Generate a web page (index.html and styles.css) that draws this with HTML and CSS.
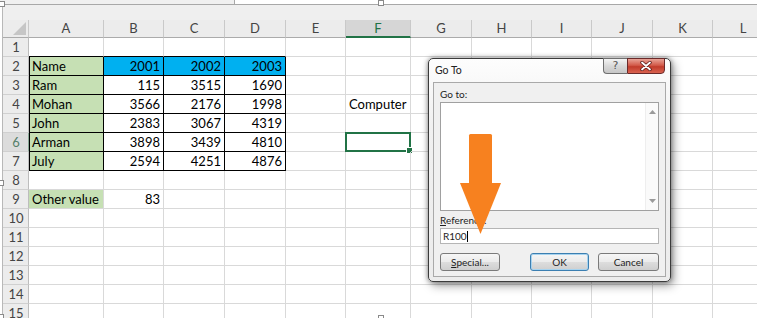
FILE: index.html
```html
<!DOCTYPE html>
<html>
<head>
<meta charset="utf-8">
<link rel="stylesheet" href="styles.css">
</head>
<body>
<div class="app">
  <div class="topbar"><div class="tb-left"></div><div class="tb-box"></div></div>
  <div class="sheet">
    <div class="gutter"></div>
    <div class="grid">
      <div class="strip"></div>
      <div class="row hdr">
        <div class="corner"><span class="tri"></span></div>
        <div>A</div><div>B</div><div>C</div><div>D</div><div>E</div><div class="selcol">F</div><div>G</div><div>H</div><div>I</div><div>J</div><div>K</div><div>L</div>
      </div>
      <div class="row">
        <div class="rh">1</div>
        <div class="bt"></div><div class="bt"></div><div class="bt"></div><div class="bt"></div><div></div><div></div><div></div><div></div><div></div><div></div><div></div><div></div>
      </div>
      <div class="row">
        <div class="rh">2</div>
        <div class="t g bx bxl">Name</div><div class="n bl bx">2001</div><div class="n bl bx">2002</div><div class="n bl bx">2003</div><div></div><div></div><div></div><div></div><div></div><div></div><div></div><div></div>
      </div>
      <div class="row">
        <div class="rh">3</div>
        <div class="t g bx bxl">Ram</div><div class="n bx">115</div><div class="n bx">3515</div><div class="n bx">1690</div><div></div><div></div><div></div><div></div><div></div><div></div><div></div><div></div>
      </div>
      <div class="row">
        <div class="rh">4</div>
        <div class="t g bx bxl">Mohan</div><div class="n bx">3566</div><div class="n bx">2176</div><div class="n bx">1998</div><div></div><div class="t">Computer</div><div></div><div></div><div></div><div></div><div></div><div></div>
      </div>
      <div class="row">
        <div class="rh">5</div>
        <div class="t g bx bxl">John</div><div class="n bx">2383</div><div class="n bx">3067</div><div class="n bx">4319</div><div></div><div></div><div></div><div></div><div></div><div></div><div></div><div></div>
      </div>
      <div class="row">
        <div class="rh selrow">6</div>
        <div class="t g bx bxl">Arman</div><div class="n bx">3898</div><div class="n bx">3439</div><div class="n bx">4810</div><div></div><div class="selcell"></div><div></div><div></div><div></div><div></div><div></div><div></div>
      </div>
      <div class="row">
        <div class="rh">7</div>
        <div class="t g bx bxl">July</div><div class="n bx">2594</div><div class="n bx">4251</div><div class="n bx">4876</div><div></div><div></div><div></div><div></div><div></div><div></div><div></div><div></div>
      </div>
      <div class="row">
        <div class="rh">8</div>
        <div></div><div></div><div></div><div></div><div></div><div></div><div></div><div></div><div></div><div></div><div></div><div></div>
      </div>
      <div class="row">
        <div class="rh">9</div>
        <div class="t g">Other value</div><div class="n">83</div><div></div><div></div><div></div><div></div><div></div><div></div><div></div><div></div><div></div><div></div>
      </div>
      <div class="row">
        <div class="rh">10</div>
        <div></div><div></div><div></div><div></div><div></div><div></div><div></div><div></div><div></div><div></div><div></div><div></div>
      </div>
      <div class="row">
        <div class="rh">11</div>
        <div></div><div></div><div></div><div></div><div></div><div></div><div></div><div></div><div></div><div></div><div></div><div></div>
      </div>
      <div class="row">
        <div class="rh">12</div>
        <div></div><div></div><div></div><div></div><div></div><div></div><div></div><div></div><div></div><div></div><div></div><div></div>
      </div>
      <div class="row">
        <div class="rh">13</div>
        <div></div><div></div><div></div><div></div><div></div><div></div><div></div><div></div><div></div><div></div><div></div><div></div>
      </div>
      <div class="row">
        <div class="rh">14</div>
        <div></div><div></div><div></div><div></div><div></div><div></div><div></div><div></div><div></div><div></div><div></div><div></div>
      </div>
      <div class="row">
        <div class="rh">15</div>
        <div></div><div></div><div></div><div></div><div></div><div></div><div></div><div></div><div></div><div></div><div></div><div></div>
      </div>
    </div>
  </div>

  <span class="handle h-tl"></span>
  <span class="handle h-tm"></span>
  <span class="handle h-ml"></span>
  <span class="handle h-bl"></span>
  <span class="handle h-bm"></span>

  <div class="dlg">
    <div class="dlg-title">Go To</div>
    <div class="dlg-ctrls">
      <div class="btn-help">?</div>
      <div class="btn-close">
        <svg width="14" height="10" viewBox="0 0 14 10"><path d="M3 1.5 L11 8.5 M11 1.5 L3 8.5" stroke="#5a1a1a" stroke-width="3.4" stroke-linecap="round"/><path d="M3 1.5 L11 8.5 M11 1.5 L3 8.5" stroke="#ffffff" stroke-width="1.8" stroke-linecap="round"/></svg>
      </div>
    </div>
    <div class="dlg-body">
      <div class="lbl">Go to:</div>
      <div class="listbox">
        <div class="vscroll">
          <svg class="arr-up" width="7" height="4" viewBox="0 0 7 4"><path d="M0 4 L3.5 0 L7 4 Z" fill="#9a9a9a"/></svg>
          <svg class="arr-dn" width="7" height="4" viewBox="0 0 7 4"><path d="M0 0 L7 0 L3.5 4 Z" fill="#9a9a9a"/></svg>
        </div>
      </div>
      <div class="lbl ref"><u>R</u>eference:</div>
      <div class="input">R100<span class="caret"></span></div>
      <div class="btns">
        <div class="btn"><u>S</u>pecial...</div>
        <div class="btn ok">OK</div>
        <div class="btn">Cancel</div>
      </div>
    </div>
  </div>

  <svg class="arrow" width="44" height="102" viewBox="0 0 44 102">
    <rect x="10" y="0" width="23" height="50" rx="1.5" fill="#f7811f"/>
    <path d="M1 49 L42 49 L21.5 100 Z" fill="#f7811f"/>
  </svg>
</div>
</body>
</html>
```

FILE: styles.css
```css
* { box-sizing: border-box; }
html, body { margin: 0; padding: 0; }
body {
  width: 757px;
  height: 318px;
  overflow: hidden;
  background: #ffffff;
  font-family: Lato, "Liberation Sans", sans-serif;
}
.app {
  position: relative;
  width: 757px;
  height: 318px;
  overflow: hidden;
}
.topbar {
  display: flex;
  height: 5px;
  border-bottom: 1px solid #a8a8a8;
}
.tb-left {
  width: 234px;
  background: #f0f0f0;
}
.tb-box {
  flex: 1;
  background: #ffffff;
  border-left: 1px solid #a8a8a8;
}
.sheet {
  display: flex;
}
.gutter {
  width: 3px;
  flex: none;
  background: #ffffff;
  border-right: 1px solid #b8b8b8;
}
.grid {
  flex: none;
  width: 770px;
}
.strip {
  height: 15px;
  background: #efefef;
}
.row {
  display: grid;
  grid-template-columns: 26px 75px 60px 61px 61px 60px 65px 61px 60px 60px 61px 60px 61px;
  height: 19px;
  font-size: 13px;
  color: #000;
}
.row > div {
  border-right: 1px solid #d9d9d9;
  border-bottom: 1px solid #d9d9d9;
  line-height: 18px;
  white-space: nowrap;
  overflow: hidden;
  position: relative;
}
.row.hdr {
  height: 18px;
  background: #ececec;
  color: #444444;
}
.row.hdr > div {
  text-align: center;
  border-right-color: #c9c9c9;
  border-bottom-color: #ababab;
  line-height: 17px;
}
.row.hdr > .selcol {
  background: #d6d6d6;
  color: #217346;
  border-bottom: 2px solid #217346;
}
.corner { background: #ececec; }
.tri {
  position: absolute;
  right: 2px;
  bottom: 2px;
  width: 0;
  height: 0;
  border-left: 13px solid transparent;
  border-bottom: 13px solid #c6c6c6;
}
.row > .rh {
  background: #ececec;
  color: #444444;
  text-align: center;
  border-right-color: #bdbdbd;
  border-bottom-color: #d0d0d0;
  padding-left: 1px;
}
.row > .rh.selrow {
  background: #dcdcdc;
  color: #56806a;
  border-right: 1px solid #8aa896;
}
.t { padding-left: 3px; text-align: left; }
.n { padding-right: 3px; text-align: right; }
.g { background: #c6e0b4; }
.bl { background: #00b0f0; }
.row > .bx {
  border-right-color: #000000;
  border-bottom-color: #000000;
}
.row > .bxl { box-shadow: inset 1px 0 0 #000000; }
.row > .bt { border-bottom-color: #000000; }
.row > .selcell {
  border: 2px solid #217346;
  margin: -1px 0 0 -1px;
  width: 66px;
  height: 20px;
  overflow: visible;
}
.selcell::after {
  content: "";
  position: absolute;
  right: -4px;
  bottom: -4px;
  width: 5px;
  height: 5px;
  background: #217346;
  border: 1px solid #ffffff;
}

.handle {
  position: absolute;
  width: 6px;
  height: 6px;
  background: #ffffff;
  border: 1px solid #8a8a8a;
}
.h-tl { left: -1px; top: 1px; }
.h-tm { left: 378px; top: 0px; }
.h-ml { left: -2px; top: 180px; }
.h-bl { left: -2px; top: 314px; }
.h-bm { left: 378px; top: 315px; }

.dlg {
  position: absolute;
  left: 428px;
  top: 58px;
  width: 243px;
  height: 224px;
  border: 1px solid #3b3b3b;
  border-radius: 5px;
  background: linear-gradient(#fdfdfd, #f1f1f1 30%, #ececec);
  box-shadow: 0 0 5px rgba(0,0,0,0.45), 3px 4px 10px rgba(0,0,0,0.35);
  font-family: Lato, "Liberation Sans", sans-serif;
  font-size: 10px;
  color: #1e1e1e;
}
.dlg-title {
  height: 23px;
  line-height: 23px;
  padding-left: 6px;
  font-size: 10.5px;
  color: #222;
}
.dlg-ctrls {
  position: absolute;
  top: -1px;
  right: 5px;
  display: flex;
}
.btn-help {
  width: 24px;
  height: 16px;
  border: 1px solid #6f6f6f;
  border-right: none;
  border-radius: 0 0 0 4px;
  background: linear-gradient(#f4f4f4, #d8d8d8 50%, #c6c6c6);
  color: #555;
  text-align: center;
  font-size: 11px;
  line-height: 14px;
  font-family: "DejaVu Sans", sans-serif;
}
.btn-close {
  width: 38px;
  height: 16px;
  border: 1px solid #6a2a2a;
  border-radius: 0 0 4px 0;
  background: linear-gradient(#e8a397, #d35a4a 45%, #c13b2b 55%, #d9624f);
  display: flex;
  align-items: center;
  justify-content: center;
}
.dlg-body {
  margin: 0 4px;
  height: 195px;
  border: 1px solid #a9a9a9;
  background: #f0f0f0;
  padding: 3px 6px 0 6px;
  display: flex;
  flex-direction: column;
}
.lbl {
  height: 16px;
  line-height: 16px;
}
.lbl.ref {
  margin-top: 1px;
}
.listbox {
  position: relative;
  height: 109px;
  background: #ffffff;
  border: 1px solid #a0a0a0;
}
.vscroll {
  position: absolute;
  right: 0;
  top: 0;
  bottom: 0;
  width: 13px;
  background: #fafafa;
  border-left: 1px solid #eeeeee;
}
.arr-up { position: absolute; left: 3px; top: 7px; }
.arr-dn { position: absolute; left: 3px; bottom: 7px; }
.input {
  height: 16px;
  background: #ffffff;
  border: 1px solid #b5b5b5;
  line-height: 14px;
  padding-left: 2px;
  font-size: 10px;
  display: flex;
  align-items: center;
}
.caret {
  display: inline-block;
  width: 1px;
  height: 11px;
  background: #000;
  margin-left: 0;
}
.btns {
  margin-top: 9px;
  display: flex;
  gap: 9px;
}
.btn {
  height: 18px;
  line-height: 16px;
  text-align: center;
  border: 1px solid #7a7a7a;
  border-radius: 3px;
  background: linear-gradient(#f6f6f6, #ebebeb 50%, #dddddd 51%, #cfcfcf);
  width: 61px;
}
.btn:first-child {
  width: 60px;
  margin-right: 21px;
}
.btn.ok {
  width: 59px;
  border-color: #3c7fb1;
  box-shadow: inset 0 0 0 1px #a7d3ef;
}
.arrow {
  position: absolute;
  left: 459px;
  top: 134px;
}
```
